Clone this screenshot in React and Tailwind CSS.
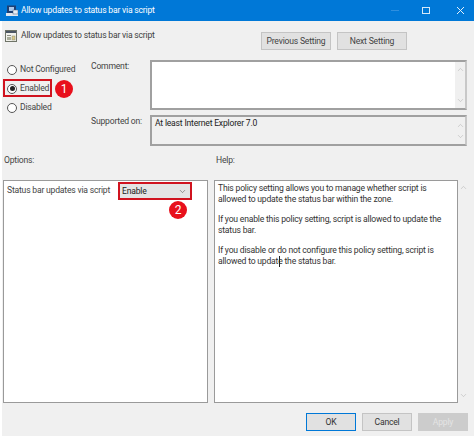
import React from 'react';
import { ChevronDown, ChevronUp } from 'lucide-react';

const PolicyIcon = ({ className }) => (
  <svg viewBox="0 0 12 12" className={className}>
    <rect x="0.5" y="0.5" width="11" height="11" fill="#f2f2ec" stroke="#6f7468" />
    <rect x="1" y="1" width="10" height="2" fill="#4b5563" />
    <rect x="2" y="5" width="4" height="1" fill="#8d8f85" />
    <rect x="2" y="7" width="4" height="3" fill="#a9ad9a" />
    <rect x="7" y="6" width="3" height="4" fill="#d8c98a" stroke="#8a8a70" strokeWidth="0.5" />
  </svg>
);

const TitleIcon = ({ className }) => (
  <svg viewBox="0 0 12 12" className={className}>
    <rect x="1" y="0.5" width="9" height="8" fill="#1d3f73" />
    <rect x="3" y="2" width="5" height="4" fill="#a9c7ea" />
    <rect x="0" y="8" width="12" height="3" fill="#dfe6ef" />
    <rect x="7" y="5" width="5" height="4" fill="#e9eef5" stroke="#4a5f80" strokeWidth="0.5" />
  </svg>
);

const Radio = ({ checked, label }) => (
  <div className="flex items-center gap-[3px] h-[19px] whitespace-nowrap">
    <span className="w-[10px] h-[10px] shrink-0 rounded-full border border-[#555555] bg-white flex items-center justify-center">
      {checked && <span className="w-[5px] h-[5px] rounded-full bg-[#222222]" />}
    </span>
    <span>{label}</span>
  </div>
);

const Badge = ({ className, children }) => (
  <span className={`absolute w-[18px] h-[18px] rounded-full bg-[#e8101c] text-white text-[12px] tracking-normal flex items-center justify-center ${className}`}>
    {children}
  </span>
);

const ScrollBar = () => (
  <div className="w-[10px] shrink-0 flex flex-col justify-between items-center py-[3px] bg-[#f0f0f0] text-[#b4b4b4]">
    <ChevronUp size={9} strokeWidth={1.5} />
    <ChevronDown size={9} strokeWidth={1.5} />
  </div>
);

const FooterButton = ({ className, children }) => (
  <button className={`w-[50px] h-[18px] flex items-center justify-center border ${className}`}>
    {children}
  </button>
);

export default function App() {
  return (
    <div className="w-[474px] h-[439px] bg-white flex flex-col overflow-hidden text-[#333333] text-[8.6px] tracking-[-0.2px] leading-[11px] font-['Roboto',sans-serif]">
      {/* Title bar */}
      <div className="h-[21px] shrink-0 bg-[#0078d7] flex items-center pl-[6px] text-white">
        <TitleIcon className="w-[12px] h-[12px]" />
        <span className="ml-[3px]">Allow updates to status bar via script</span>
        <div className="ml-auto flex items-center">
          <span className="w-[8px] h-px bg-[#2f8fdf] mr-[23px]" />
          <span className="w-[8px] h-[7px] border border-[#d5e8f8] mr-[26px]" />
          <svg viewBox="0 0 9 9" className="w-[9px] h-[9px] mr-[9px]">
            <path d="M1 1L8 8M8 1L1 8" stroke="#e3f0fb" strokeWidth="1" />
          </svg>
        </div>
      </div>

      <div className="ml-[2px] h-[415px] shrink-0 bg-[#f0f0f0] flex flex-col">
        {/* Header row */}
        <div className="h-[39px] flex pl-[3px] pr-[67px]">
          <div className="flex items-start pt-[8px] gap-[4px] text-[#404040]">
            <PolicyIcon className="w-[12px] h-[12px] mt-[1px]" />
            <span className="mt-[1px]">Allow updates to status bar via script</span>
          </div>
          <div className="ml-auto flex gap-[6px] pt-[11px]">
            <button className="w-[70px] h-[18px] bg-[#e1e1e1] border border-[#c4c4c4] text-[#444444]">Previous Setting</button>
            <button className="w-[70px] h-[18px] bg-[#e1e1e1] border border-[#c4c4c4] text-[#444444]">Next Setting</button>
          </div>
        </div>

        {/* Radios + comment / supported */}
        <div className="flex h-[86px]">
          <div className="relative w-[89px] shrink-0 pl-[5px] text-[#444444]">
            <Radio label="Not Configured" />
            <Radio checked label="Enabled" />
            <Radio label="Disabled" />
            <span className="absolute left-[1px] top-[19px] w-[49px] h-[18px] border-2 border-[#d0131f]" />
            <Badge className="left-[53px] top-[20px]">1</Badge>
          </div>
          <div className="flex flex-col gap-[5px]">
            <div className="flex">
              <span className="w-[59px] pt-[1px] text-[#444444]">Comment:</span>
              <div className="w-[317px] h-[50px] bg-white border-2 border-[#a0a0a0] border-r-[#c8c8c8] flex justify-end">
                <ScrollBar />
              </div>
            </div>
            <div className="flex">
              <span className="w-[59px] pt-[1px] text-[#444444]">Supported on:</span>
              <div className="w-[317px] h-[31px] bg-[#f0f0f0] border-2 border-[#a0a0a0] border-r-[#c8c8c8] flex justify-between pl-[3px] pt-[1px] text-[#222222]">
                <span>At least Internet Explorer 7.0</span>
                <ScrollBar />
              </div>
            </div>
          </div>
        </div>

        {/* Section labels */}
        <div className="flex h-[34px] pt-[9px] pl-[2px] text-[#444444]">
          <span className="w-[212px]">Options:</span>
          <span>Help:</span>
        </div>

        {/* Options and help panels */}
        <div className="flex h-[223px] pl-[1px]">
          <div className="relative w-[205px] bg-white border border-[#9a9a9a] flex items-start pl-[3px] pt-[1px] text-[#444444]">
            <span className="w-[111px] pt-[3px] whitespace-nowrap">Status bar updates via script</span>
            <div className="w-[74px] h-[18px] flex items-center justify-between px-[2px] pr-[3px] bg-[#e4e4e4] border-2 border-[#d0131f] text-[#222222]">
              <span>Enable</span>
              <ChevronDown size={9} strokeWidth={1.5} className="text-[#555555]" />
            </div>
            <Badge className="left-[165px] top-[20px]">2</Badge>
          </div>
          <div className="ml-[6px] w-[244px] bg-white border border-[#9a9a9a] flex flex-col gap-[9px] pl-[3px] pr-[6px] pt-[2px] text-[#333333]">
            <p>This policy setting allows you to manage whether script is allowed to update the status bar within the zone.</p>
            <p>If you enable this policy setting, script is allowed to update the status bar.</p>
            <p className="relative">
              If you disable or do not configure this policy setting, script is allowed to update the status bar.
              <span className="absolute left-[61px] top-[11px] w-px h-[11px] bg-[#222222]" />
            </p>
          </div>
          <ScrollBar />
        </div>

        {/* Footer buttons */}
        <div className="flex justify-end gap-[6px] pt-[10px] pr-[6px]">
          <FooterButton className="bg-[#e1e1e1] border-[#0078d7] text-[#333333]">OK</FooterButton>
          <FooterButton className="bg-[#e1e1e1] border-[#c4c4c4] text-[#333333]">Cancel</FooterButton>
          <FooterButton className="bg-[#cccccc] border-[#cccccc] text-[#e4e4e4]">Apply</FooterButton>
        </div>
      </div>
    </div>
  );
}
